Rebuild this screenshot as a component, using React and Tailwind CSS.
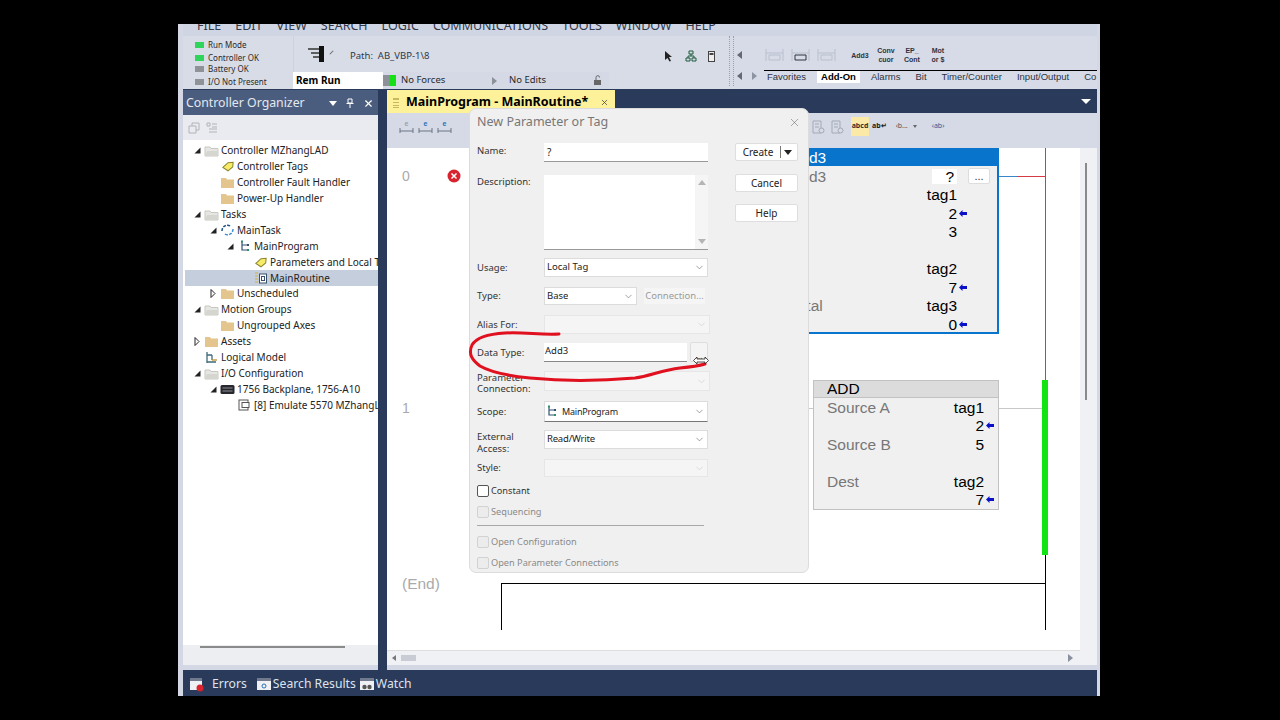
import {ChevronDown, X} from "lucide-react";

const sans = "font-['Noto_Sans',sans-serif]";
const arial = "font-['Liberation_Sans',sans-serif]";

const INDENT = ["pl-[3px]", "pl-[19px]", "pl-[36px]", "pl-[52px]"];

function Folder({open}) {
	if (open) {
		return (
			<svg width="15" height="13" viewBox="0 0 15 13">
				<path d="M1 3h5l1 1.500h7v7.500H1z" fill="#e6e6e2" stroke="#c9c9c4" />
				<path d="M1 12l2-5h11l-1 5z" fill="#d6d6d0" />
			</svg>
		);
	}
	return (
		<svg width="13" height="11" viewBox="0 0 13 11">
			<path d="M0 1h5l1 1.500h7V11H0z" fill="#e3c58d" />
		</svg>
	);
}

function Tag() {
	return (
		<svg width="12" height="11" viewBox="0 0 14 12">
			<path d="M1 7l6-5.500 6-.5-.5 5.500L7 11z" fill="#f6ec6a" stroke="#8c8430" strokeWidth="1.200" />
		</svg>
	);
}

function ProgramIcon() {
	return (
		<svg width="10" height="13" viewBox="0 0 10 13" fill="none">
			<path d="M2 2v8h6M2 5h5" stroke="#33516f" strokeWidth="1.200" />
			<rect x="1" y="0.500" width="2" height="2" fill="#2f8f6a" />
			<rect x="7" y="4" width="2" height="2" fill="#33516f" />
			<rect x="7" y="9" width="2" height="2" fill="#2f8f6a" />
		</svg>
	);
}

function TaskIcon() {
	return (
		<svg width="15" height="14" viewBox="0 0 15 14" fill="none">
			<path d="M2 8a5.500 5.500 0 0 1 9-4.500" stroke="#1c4f8c" strokeWidth="1.500" strokeDasharray="3 1.200" />
			<path d="M13 6a5.500 5.500 0 0 1-9 4.500" stroke="#3f8fd0" strokeWidth="1.500" strokeDasharray="3 1.200" />
		</svg>
	);
}

function RoutineIcon() {
	return (
		<svg width="14" height="13" viewBox="0 0 14 13" fill="none">
			<path d="M1 1h3M1 4h3M1 7h3M1 10h3" stroke="#d8b030" strokeWidth="1.200" />
			<rect x="5.500" y="2" width="7" height="9" stroke="#38506c" fill="#fff" />
			<rect x="7.500" y="4.500" width="3" height="4" stroke="#38506c" />
		</svg>
	);
}

function ModelIcon() {
	return (
		<svg width="15" height="13" viewBox="0 0 15 13" fill="none">
			<path d="M3 1v11M3 4h5M3 11h9M8 4v5" stroke="#3e6a7a" strokeWidth="1.300" />
			<path d="M8 9h5" stroke="#c09030" strokeWidth="1.300" />
		</svg>
	);
}

function BackplaneIcon() {
	return (
		<svg width="15" height="11" viewBox="0 0 15 11">
			<rect x="0.500" y="1" width="14" height="9" rx="1.500" fill="#27272e" />
			<path d="M2.500 4h10M2.500 7h10" stroke="#8e8e96" />
		</svg>
	);
}

function ModuleIcon() {
	return (
		<svg width="13" height="12" viewBox="0 0 13 12" fill="none">
			<rect x="1" y="1" width="9" height="10" stroke="#555" />
			<rect x="4" y="3.500" width="7" height="5" stroke="#555" fill="#fff" />
		</svg>
	);
}

function Arrow({open}) {
	if (open) {
		return (
			<svg width="7" height="7" viewBox="0 0 7 7">
				<path d="M6.500 0.500v6h-6z" fill="#222" />
			</svg>
		);
	}
	return (
		<svg width="6" height="9" viewBox="0 0 6 9" fill="none">
			<path d="M1 0.500l4 4-4 4z" stroke="#222" />
		</svg>
	);
}

const TREE = [
	{d: 0, open: true, icon: <Folder open />, label: "Controller MZhangLAD"},
	{d: 1, icon: <Tag />, label: "Controller Tags"},
	{d: 1, icon: <Folder />, label: "Controller Fault Handler"},
	{d: 1, icon: <Folder />, label: "Power-Up Handler"},
	{d: 0, open: true, icon: <Folder open />, label: "Tasks"},
	{d: 1, open: true, icon: <TaskIcon />, label: "MainTask"},
	{d: 2, open: true, icon: <ProgramIcon />, label: "MainProgram"},
	{d: 3, icon: <Tag />, label: "Parameters and Local Tags"},
	{d: 3, icon: <RoutineIcon />, label: "MainRoutine", selected: true},
	{d: 1, open: false, icon: <Folder />, label: "Unscheduled"},
	{d: 0, open: true, icon: <Folder open />, label: "Motion Groups"},
	{d: 1, icon: <Folder />, label: "Ungrouped Axes"},
	{d: 0, open: false, icon: <Folder />, label: "Assets"},
	{d: 0, icon: <ModelIcon />, label: "Logical Model"},
	{d: 0, open: true, icon: <Folder open />, label: "I/O Configuration"},
	{d: 1, open: true, icon: <BackplaneIcon />, label: "1756 Backplane, 1756-A10"},
	{d: 2, icon: <ModuleIcon />, label: "[8] Emulate 5570 MZhangLAD"},
];

function TreeRow({row}) {
	return (
		<div className={`flex h-[15.900px] items-center overflow-hidden whitespace-nowrap ${INDENT[row.d]} ${row.selected ? "bg-[#c5cedd]" : ""}`}>
			<span className="flex w-[16px] shrink-0 items-center justify-center pl-[2px]">
				{row.open === true && <Arrow open />}
				{row.open === false && <Arrow />}
			</span>
			<span className="flex w-[15px] shrink-0 items-center justify-center">{row.icon}</span>
			<span className="ml-[2px] text-[10px] text-[#222]">{row.label}</span>
		</div>
	);
}

function Led({on, label}) {
	return (
		<div className="flex h-[12.500px] items-center gap-[4px]">
			<span className={`h-[6px] w-[9px] ${on ? "bg-[#2fd45a]" : "bg-[#8f9296]"}`} />
			<span className="text-[8px] text-[#2a2a2a]">{label}</span>
		</div>
	);
}

function SelectBox({children, disabled, strong, className = "w-[164px]"}) {
	return (
		<div className={`flex h-full items-center justify-between px-[2px] text-[9.500px] text-[#222] ${className} ${disabled ? "bg-[#f5f5f5] border border-[#e6e6e6]" : "bg-white border border-[#dcdcdc]"} ${strong ? "border-b-[#777] border-[#aaa]" : ""}`}>
			<span className="flex items-center gap-[5px] truncate">{children}</span>
			<ChevronDown size={11} strokeWidth={1.200} className={disabled ? "text-[#c4c4c4]" : "text-[#555]"} />
		</div>
	);
}

function FormRow({label, h, mt, lift = "", children}) {
	return (
		<div className={`flex items-center ${h} ${mt}`}>
			<div className={`w-[67px] shrink-0 text-[9.500px] leading-[11.500px] text-[#333] ${lift}`}>{label}</div>
			{children}
		</div>
	);
}

function Check({label, disabled, mt}) {
	return (
		<div className={`flex h-[13px] items-center gap-[2px] ${mt}`}>
			<span className={`h-[12px] w-[12px] rounded-[2px] border ${disabled ? "border-[#d2d2d2] bg-[#ececec]" : "border-[#555] bg-white"}`} />
			<span className={`text-[9.200px] ${disabled ? "text-[#8a8a8a]" : "text-[#333]"}`}>{label}</span>
		</div>
	);
}

function DlgButton({children, mt}) {
	return (
		<div className={`flex h-[18px] w-[63px] items-center justify-center rounded-[2px] border border-[#dedede] bg-white text-[10px] text-[#222] ${mt}`}>{children}</div>
	);
}

function Dialog() {
	return (
		<div className={`absolute left-[82px] top-[18px] h-[465px] w-[340px] rounded-[7px] border border-[#dcdcdc] bg-[#f0f0f0] ${sans}`}>
			<div className="flex h-[26px] items-center justify-between pl-[7px] pr-[7px] pt-[1px]">
				<span className="text-[12.500px] text-[#777]">New Parameter or Tag</span>
				<X size={13} strokeWidth={1} className="text-[#666]" />
			</div>
			<div className="flex pl-[7px]">
				<div className="w-[233px]">
					<FormRow label="Name:" h="h-[21px]" mt="mt-[8px]" lift="-mt-[5px]">
						<div className="h-[19px] w-[164px] self-start border-b border-[#999] bg-white pl-[3px] text-[10px] leading-[19px] text-[#222]">?</div>
					</FormRow>
					<div className="mt-[11px] flex h-[75px]">
						<div className="w-[67px] text-[9.500px] text-[#333]">Description:</div>
						<div className="relative h-[75px] w-[164px] border-b border-[#999] bg-white">
							<div className="absolute bottom-0 right-0 top-0 flex w-[13px] flex-col items-center justify-between bg-[#f5f5f5] py-[5px]">
								<span className="h-0 w-0 border-x-[4px] border-b-[5px] border-x-transparent border-b-[#b5b5b5]" />
								<span className="h-0 w-0 border-x-[4px] border-t-[5px] border-x-transparent border-t-[#b5b5b5]" />
							</div>
						</div>
					</div>
					<FormRow label="Usage:" h="h-[19px]" mt="mt-[8px]">
						<SelectBox>Local Tag</SelectBox>
					</FormRow>
					<FormRow label="Type:" h="h-[18px]" mt="mt-[10px]">
						<SelectBox className="w-[93px]">Base</SelectBox>
						<div className="ml-[7px] flex h-[16px] w-[61px] items-center justify-center bg-[#f5f5f5] text-[9.500px] text-[#9a9a9a]">Connection...</div>
					</FormRow>
					<FormRow label="Alias For:" h="h-[19px]" mt="mt-[10px]">
						<SelectBox disabled className="w-[166px]" />
					</FormRow>
					<FormRow label="Data Type:" h="h-[20px]" mt="mt-[8px]" lift="pt-[2px]">
						<div className="h-[19px] w-[143px] border-b border-[#888] bg-white pl-[1px] text-[9.500px] leading-[15px] text-[#222]">Add3</div>
						<div className="ml-[3px] flex h-[20px] w-[18px] items-end justify-center rounded-[2px] border border-[#dedede] bg-[#f4f4f4] text-[9px] leading-[11px] text-[#555]">...</div>
					</FormRow>
					<FormRow label={<>Parameter<br />Connection:</>} h="h-[20px]" mt="mt-[9px]" lift="pt-[4px]">
						<SelectBox disabled className="w-[166px]" />
					</FormRow>
					<FormRow label="Scope:" h="h-[21px]" mt="mt-[10px]">
						<SelectBox strong><ProgramIcon /><span className="text-[9px] tracking-[-0.2px]">MainProgram</span></SelectBox>
					</FormRow>
					<FormRow label={<>External<br />Access:</>} h="h-[19px]" mt="mt-[8px]" lift="pt-[6px]">
						<SelectBox><span className="tracking-[-0.2px]">Read/Write</span></SelectBox>
					</FormRow>
					<FormRow label="Style:" h="h-[18px]" mt="mt-[10px]">
						<SelectBox disabled />
					</FormRow>
				</div>
				<div className="ml-[25px] pt-[8px]">
					<div className="flex h-[18px] w-[63px] items-center rounded-[2px] border border-[#dedede] bg-white text-[10px] text-[#222]">
						<span className="w-[44px] text-center">Create</span>
						<span className="h-[12px] w-px bg-[#777]" />
						<span className="ml-[3px] h-0 w-0 border-x-[4px] border-t-[5px] border-x-transparent border-t-[#222]" />
					</div>
					<DlgButton mt="mt-[13px]">Cancel</DlgButton>
					<DlgButton mt="mt-[12px]">Help</DlgButton>
				</div>
			</div>
			<div className="pl-[7px]">
				<Check label="Constant" mt="mt-[7px]" />
				<Check label="Sequencing" disabled mt="mt-[8px]" />
				<div className="mt-[7px] h-px w-[227px] bg-[#a8a8a8]" />
				<Check label="Open Configuration" disabled mt="mt-[9px]" />
				<Check label="Open Parameter Connections" disabled mt="mt-[8px]" />
			</div>
		</div>
	);
}

function BlueArrow() {
	return (
		<svg width="8" height="7" viewBox="0 0 8 7" className="ml-[2px]">
			<path d="M0 3.500L3.500 0v2H8v3H3.500v2z" fill="#0a10c8" />
		</svg>
	);
}

function BlockRow({label, value, arrow, pr}) {
	return (
		<div className={`flex h-[18.500px] items-center justify-between pl-[13px] text-[15.500px] leading-none ${pr}`}>
			<span className="text-[#777]">{label}</span>
			<span className="flex items-center text-black">
				{value}
				{arrow ? <BlueArrow /> : <span className="ml-[2px] w-[8px]" />}
			</span>
		</div>
	);
}

function Ladder() {
	return (
		<div className={`relative h-full overflow-hidden bg-white ${arial}`}>
			<span className="absolute left-[15px] top-[18px] text-[14px] text-[#aaa]">0</span>
			<svg width="14" height="14" viewBox="0 0 14 14" className="absolute left-[60px] top-[21px]">
				<circle cx="7" cy="7" r="6.500" fill="#d9232e" />
				<path d="M4.500 4.500l5 5M9.500 4.500l-5 5" stroke="#fff" strokeWidth="1.500" />
			</svg>
			<span className="absolute left-[15px] top-[250px] text-[14px] text-[#aaa]">1</span>
			<span className="absolute left-[15px] top-[424px] text-[15.500px] text-[#aaa]">(End)</span>

			<div className="absolute left-[114px] top-[435px] h-[47px] w-px bg-black" />
			<div className="absolute left-[114px] top-[435px] h-px w-[545px] bg-black" />
			<div className="absolute left-[658px] top-0 h-[232px] w-px bg-[#d83a44]" />
			<div className="absolute left-[655px] top-[232px] h-[175px] w-[6px] bg-[#12e312]" />
			<div className="absolute left-[658px] top-[407px] h-[75px] w-px bg-black" />
			<div className="absolute left-[611px] top-[28px] h-px w-[46px] bg-[#3a86c8]" />
			<div className="absolute left-[630px] top-[28px] h-px w-[28px] bg-[#d83a44]" />
			<div className="absolute left-[611px] top-[260px] h-px w-[44px] bg-[#c8c8c8]" />
			<div className="absolute left-[400px] top-[260px] h-px w-[26px] bg-[#c8c8c8]" />

			<div className="absolute left-[388px] top-0 h-[186px] w-[224px] border-2 border-[#0874cc] bg-[#f0f0f0]">
				<div className="flex h-[16px] items-center bg-[#0874cc] pl-[13px] text-[15.500px] leading-none text-white">Add3</div>
				<div className="relative mt-[1px]">
					<BlockRow label="Add3" value={<span className="w-[25px] bg-white pr-[3px] text-right">?</span>} pr="pr-[30px]" />
					<div className="absolute right-[7px] top-[1px] flex h-[16px] w-[22px] items-center justify-center rounded-[2px] border border-[#ddd] bg-white text-[11px] text-[#333]">...</div>
				</div>
				<BlockRow value="tag1" pr="pr-[30px]" />
				<BlockRow value="2" arrow pr="pr-[30px]" />
				<BlockRow value="3" pr="pr-[30px]" />
				<BlockRow pr="pr-[30px]" />
				<BlockRow value="tag2" pr="pr-[30px]" />
				<BlockRow value="7" arrow pr="pr-[30px]" />
				<BlockRow label="Total" value="tag3" pr="pr-[30px]" />
				<BlockRow value="0" arrow pr="pr-[30px]" />
			</div>

			<div className="absolute left-[426px] top-[232px] h-[130px] w-[186px] border border-[#c2c2c2] bg-[#f0f0f0]">
				<div className="flex h-[17px] items-center border-b border-[#c2c2c2] bg-[#dcdcdc] pl-[13px] text-[15.500px] text-black">ADD</div>
				<BlockRow label="Source A" value="tag1" pr="pr-[4px]" />
				<BlockRow value="2" arrow pr="pr-[4px]" />
				<BlockRow label="Source B" value="5" pr="pr-[4px]" />
				<BlockRow pr="pr-[4px]" />
				<BlockRow label="Dest" value="tag2" pr="pr-[4px]" />
				<BlockRow value="7" arrow pr="pr-[4px]" />
			</div>
		</div>
	);
}

function EditGlyph({label}) {
	return (
		<svg width="17" height="14" viewBox="0 0 17 14" fill="none">
			<text x="8.500" y="6" textAnchor="middle" fontSize="7" fontWeight="700" fill={label === "e" ? "#9aa0ad" : "#1f6fb8"} fontFamily="Liberation Sans">e</text>
			<path d="M2 8v5M15 8v5M2 11h13" stroke="#6c7484" />
		</svg>
	);
}

function DocGlyph() {
	return (
		<svg width="13" height="14" viewBox="0 0 13 14" fill="none">
			<path d="M1 1h8v12H1z" stroke="#a4a9b6" />
			<path d="M3 4h4M3 7h4" stroke="#a4a9b6" />
			<circle cx="9.500" cy="10.500" r="2.500" fill="#d5dae6" stroke="#a4a9b6" />
		</svg>
	);
}

function PaletteRung({on}) {
	return (
		<svg width="19" height="14" viewBox="0 0 19 14" fill="none">
			<path d="M1 1v12M18 1v12M1 5h17" stroke="#b9bfcd" />
			<path d="M4 7h11v5H4z" stroke={on ? "#2f3440" : "#b9bfcd"} />
		</svg>
	);
}

function PaletteLabel({children}) {
	return <span className={`w-[26px] text-center text-[7px] font-bold leading-[9px] text-[#2d3342] ${arial}`}>{children}</span>;
}

function RibbonTab({children, active}) {
	return (
		<span className={`flex h-[12px] items-center text-[9.500px] ${arial} ${active ? "bg-white px-[4px] font-bold text-black" : "text-[#2d3342]"}`}>{children}</span>
	);
}

function TopBar() {
	return (
		<div className={`h-[65px] shrink-0 overflow-hidden bg-[#cfd5e3] ${sans}`}>
			<div className="-mt-[8px] flex h-[20px] items-center gap-[14px] pl-[14px] text-[12.500px] text-[#30384a]">
				<span>FILE</span><span>EDIT</span><span>VIEW</span><span>SEARCH</span><span>LOGIC</span><span>COMMUNICATIONS</span><span>TOOLS</span><span>WINDOW</span><span>HELP</span>
			</div>
			<div className="flex h-[53px]">
				<div className="w-[546px] shrink-0 bg-[#d8dce7]">
					<div className="flex h-[36px]">
						<div className="w-[110px] shrink-0 pl-[12px] pt-[3px]">
							<Led on label="Run Mode" />
							<Led on label="Controller OK" />
						</div>
						<div className="flex w-[50px] shrink-0 items-center justify-center gap-[4px] border-l border-[#cdd2dd] pl-[1px]">
							<svg width="20" height="20" viewBox="0 0 20 20" fill="none">
								<path d="M1 5h11M4 9h8M6 13h6" stroke="#333" strokeWidth="1.500" />
								<rect x="12" y="2" width="5" height="16" fill="#111" />
							</svg>
							<span className="mb-[4px] h-[5px] w-px rotate-45 bg-[#666]" />
						</div>
						<div className="flex flex-1 items-center pl-[7px] pt-[4px] text-[9.500px] text-[#30384a]">Path:&nbsp; AB_VBP-1\8</div>
						<div className="flex items-center gap-[11px] pr-[14px] pt-[4px]">
							<svg width="10" height="12" viewBox="0 0 10 12"><path d="M1 1l7 6H5l2 4-1.500.500L3.500 8 1 10z" fill="#222" /></svg>
							<svg width="12" height="12" viewBox="0 0 12 12" fill="none"><path d="M4 1h4v3H4zM1 8h4v3H1zM7 8h4v3H7zM6 4v2M3 8V6h6v2" stroke="#1d5a3d" /></svg>
							<svg width="7" height="11" viewBox="0 0 7 11"><rect x="0.500" y="0.500" width="6" height="10" fill="#eee" stroke="#444" /><rect x="1.500" y="2" width="4" height="2" fill="#444" /></svg>
						</div>
					</div>
					<div className="flex h-[17px] text-[10px]">
						<div className="-mt-[9px] w-[110px] shrink-0 pl-[12px]">
							<Led label="Battery OK" />
							<Led label="I/O Not Present" />
						</div>
						<div className="flex h-[17px] w-[90px] shrink-0 items-center bg-white pl-[3px] text-[10px] font-bold text-black">Rem Run</div>
						<div className="flex w-[122px] shrink-0 items-center bg-[#d4d9e5] text-[#2a2a2a]">
							<span className="flex h-[11px] items-start">
								<span className="h-[11px] w-[6px] bg-[#8d9099]" />
								<span className="h-[11px] w-[7px] bg-[#16e016]" />
							</span>
							<span className="ml-[5px] text-[9.500px]">No Forces</span>
							<span className="ml-auto mr-[8px] h-0 w-0 border-y-[4px] border-l-[5px] border-y-transparent border-l-[#8d9099]" />
						</div>
						<div className="flex w-[104px] shrink-0 items-center justify-between bg-[#d4d9e5] pl-[4px] pr-[6px] text-[9.500px] text-[#2a2a2a]">
							No Edits
							<svg width="10" height="11" viewBox="0 0 10 11" fill="none">
								<rect x="1" y="5" width="7" height="5" fill="#666" />
								<path d="M3 5V2.500a1.800 1.800 0 0 1 3.600 0" stroke="#666" />
							</svg>
						</div>
					</div>
				</div>
				<div className="flex min-w-0 flex-1 bg-[#d6dbe7]">
					<div className="h-[50px] w-[5px] shrink-0 border-x border-dotted border-[#9aa0ad]" />
					<div className="min-w-0 flex-1 overflow-hidden pl-[3px]">
						<div className="flex h-[34px] items-center pt-[4px]">
							<span className="h-0 w-0 border-y-[4px] border-r-[5px] border-y-transparent border-r-[#667]" />
							<div className="ml-[23px] flex items-center gap-[7px]">
								<PaletteRung /><PaletteRung on /><PaletteRung />
							</div>
							<div className="ml-[11px] flex items-center">
								<PaletteLabel>Add3</PaletteLabel>
								<PaletteLabel>Conv<br />cuor</PaletteLabel>
								<PaletteLabel>EP_<br />Cont</PaletteLabel>
								<PaletteLabel>Mot<br />or $</PaletteLabel>
							</div>
						</div>
						<div className="flex h-[19px] items-start">
							<span className="mt-[2px] h-0 w-0 border-y-[4px] border-r-[5px] border-y-transparent border-r-[#667]" />
							<span className="ml-[10px] mt-[2px] h-0 w-0 border-y-[4px] border-l-[5px] border-y-transparent border-l-[#8d93a0]" />
							<div className="ml-[7px] flex h-[19px] flex-1 items-start gap-[15px] whitespace-nowrap border-t border-black pl-[3px]">
								<RibbonTab>Favorites</RibbonTab>
								<span className="-mx-[4px]"><RibbonTab active>Add-On</RibbonTab></span>
								<RibbonTab>Alarms</RibbonTab>
								<RibbonTab>Bit</RibbonTab>
								<RibbonTab>Timer/Counter</RibbonTab>
								<RibbonTab>Input/Output</RibbonTab>
								<RibbonTab>Co</RibbonTab>
							</div>
						</div>
					</div>
				</div>
			</div>
		</div>
	);
}

function Organizer() {
	return (
		<div className={`flex w-[195px] shrink-0 flex-col ${sans}`}>
			<div className="flex h-[25px] shrink-0 items-center justify-between bg-[#4b5d7e] pl-[3px] pr-[4px] pt-[1px]">
				<span className="text-[12.300px] text-[#e4e8f0]">Controller Organizer</span>
				<span className="flex items-center gap-[9px] text-white">
					<span className="h-0 w-0 border-x-[4px] border-t-[5px] border-x-transparent border-t-white" />
					<svg width="8" height="10" viewBox="0 0 8 10" fill="none"><path d="M2 1h4v4H2zM0.500 5.500h7M4 5.500V10" stroke="#fff" /></svg>
					<X size={11} strokeWidth={2.500} />
				</span>
			</div>
			<div className="flex h-[25px] shrink-0 items-center gap-[6px] bg-[#e9ebf0] pl-[5px]">
				<svg width="12" height="12" viewBox="0 0 12 12" fill="none"><path d="M1 4h7v7H1zM4 4V1h7v7H8" stroke="#b0b3ba" /></svg>
				<svg width="12" height="12" viewBox="0 0 12 12" fill="none"><path d="M1 1h3v3H1zM6 2h5M6 5h5M3 7h8M3 10h8" stroke="#b0b3ba" /></svg>
			</div>
			<div className="min-h-0 flex-1 bg-white pl-[2px] pt-[3px]">
				{TREE.map(row => <TreeRow key={row.label} row={row} />)}
			</div>
			<div className="h-[20px] shrink-0 bg-[#eceef2] pl-[17px] pt-[1px]">
				<div className="h-[2px] w-[145px] bg-[#8a8a8a]" />
			</div>
			<div className="h-[5px] shrink-0 bg-[#d3d8e4]" />
		</div>
	);
}

function Editor() {
	return (
		<div className="relative flex flex-1 flex-col">
			<div className="flex h-[23px] shrink-0 items-end">
				<div className={`flex h-[23px] w-[228px] items-center justify-between bg-[#fdf29a] pl-[6px] pr-[6px] pt-[2px] ${sans}`}>
					<span className="flex items-center gap-[7px]">
						<span className="h-[10px] w-[6px] border-y border-[#c9b860] bg-[linear-gradient(#c9b860_1px,transparent_1px)] bg-[length:6px_3px]" />
						<span className="text-[12.500px] font-bold text-black">MainProgram - MainRoutine*</span>
					</span>
					<X size={9} strokeWidth={2} className="text-[#444]" />
				</div>
				<div className="flex h-[23px] flex-1 items-center justify-end pr-[6px]">
					<span className="h-0 w-0 border-x-[5px] border-t-[5px] border-x-transparent border-t-white" />
				</div>
			</div>
			<div className="flex h-[27px] shrink-0 items-center bg-[#d5dae6] pl-[11px]">
				<div className="flex items-center gap-[2px]">
					<EditGlyph label="e" /><EditGlyph /><EditGlyph />
				</div>
				<div className="ml-[359px] flex items-center gap-[6px]">
					<DocGlyph /><DocGlyph />
				</div>
				<div className="ml-[7px] flex items-center gap-[3px]">
					<div className="flex h-[19px] w-[18px] items-center justify-center bg-[#fbe9a8] text-[7px] font-bold text-[#333]">abcd</div>
					<span className="text-[7px] font-bold text-[#222]">ab↵</span>
					<span className="ml-[6px] text-[7px] text-[#555]">‹b...</span>
					<span className="ml-[2px] h-0 w-0 border-x-[2px] border-t-[3px] border-x-transparent border-t-[#666]" />
					<span className="ml-[12px] text-[7px] text-[#2a5a9a]">‹ab›</span>
				</div>
			</div>
			<div className="h-[8px] shrink-0 bg-[#d5dae6]" />
			<div className="flex min-h-0 flex-1 bg-[#eff1f5]">
				<div className="min-w-0 flex-1 border-b border-[#ddd]">
					<Ladder />
				</div>
				<div className="w-[17px] shrink-0 pl-[5px] pt-[15px]">
					<div className="h-[237px] w-[2px] bg-[#8a8a8a]" />
				</div>
			</div>
			<div className="flex h-[14px] shrink-0 items-center bg-[#eff1f5] pl-[5px] pr-[24px]">
				<span className="h-0 w-0 border-y-[3px] border-r-[4px] border-y-transparent border-r-[#777]" />
				<span className="ml-[5px] h-[6px] w-[15px] bg-[#c9ccd4]" />
				<span className="ml-auto h-0 w-0 border-y-[4px] border-l-[5px] border-y-transparent border-l-[#8a90a0]" />
			</div>
			<div className="h-[5px] shrink-0 bg-[#d3d8e4]" />
			<Dialog />
		</div>
	);
}

function StatusBar() {
	return (
		<div className={`flex h-[26px] shrink-0 items-center bg-[#293a5a] pl-[6px] pt-[2px] text-[12.200px] text-[#dfe4ee] ${sans}`}>
			<svg width="15" height="15" viewBox="0 0 15 15">
				<rect x="1" y="1" width="12" height="12" fill="#eef0f4" />
				<rect x="1" y="1" width="12" height="3" fill="#707a8c" />
				<circle cx="11" cy="11" r="3.500" fill="#d9232e" />
			</svg>
			<span className="ml-[8px]">Errors</span>
			<svg width="16" height="15" viewBox="0 0 16 15" className="ml-[9px]">
				<rect x="1" y="1" width="14" height="12" fill="#eef0f4" />
				<rect x="1" y="1" width="14" height="3" fill="#707a8c" />
				<circle cx="8" cy="9" r="2" fill="none" stroke="#2a70b8" />
			</svg>
			<span className="ml-[1px]">Search Results</span>
			<svg width="16" height="15" viewBox="0 0 16 15" className="ml-[3px]">
				<rect x="1" y="1" width="14" height="12" fill="#eef0f4" />
				<rect x="1" y="1" width="14" height="3" fill="#707a8c" />
				<circle cx="5.500" cy="10" r="2.200" fill="#555" />
				<circle cx="10.500" cy="10" r="2.200" fill="#555" />
			</svg>
			<span className="ml-[1px]">Watch</span>
		</div>
	);
}

export default function App() {
	return (
		<div className="relative h-[720px] w-[1280px] overflow-hidden bg-black pl-[178px] pt-[24px]">
			<div className="flex h-[672px] w-[922px] flex-col bg-[#d3d8e4] pl-[5px] pr-[3px]">
				<TopBar />
				<div className="flex min-h-0 flex-1 flex-col bg-[#293a5a]">
					<div className="flex min-h-0 flex-1 pt-[1px]">
						<Organizer />
						<div className="w-[9px] shrink-0" />
						<Editor />
					</div>
					<StatusBar />
				</div>
			</div>

			{/* red ink around the data type row */}
			<svg width="1280" height="720" viewBox="0 0 1280 720" fill="none" className="pointer-events-none absolute left-0 top-0">
				<path d="M559 334C540 335 525 332 505 333C488 334 476 338 472 345C468 354 472 360 480 366C492 373 510 376 530 378C560 381 600 381 635 378C650 376 662 370 680 368C690 367 698 366 705 364" stroke="#e0101f" strokeWidth="3" strokeLinecap="round" />
			</svg>
			<svg width="16" height="9" viewBox="0 0 16 9" className="pointer-events-none absolute left-[693px] top-[356px]">
				<path d="M0.500 4.500L4 1v2h8V1l3.500 3.500L12 8V6H4v2z" fill="#fff" stroke="#222" strokeWidth="0.800" />
			</svg>
		</div>
	);
}
